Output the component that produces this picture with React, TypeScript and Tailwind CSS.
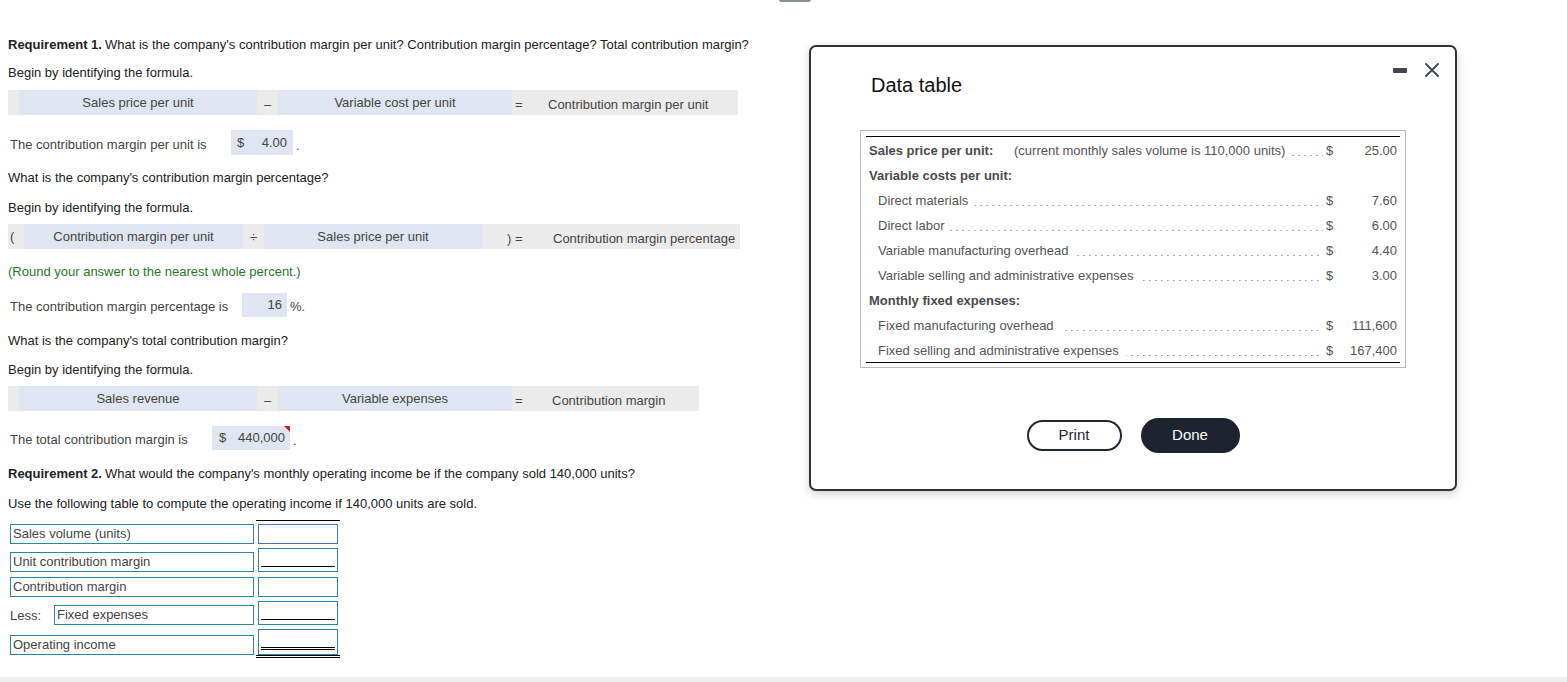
import type { ReactNode } from "react";

const line = "flex h-5 items-center";

function Cell({ w, tone, children, className = "" }: { w: string; tone: "blue" | "gray"; children?: ReactNode; className?: string }) {
	return (
		<div className={`flex h-full items-center ${w} ${tone === "blue" ? "bg-[#dfe6f1]" : "bg-[#ebebeb]"} ${className}`}>
			{children}
		</div>
	);
}

// dot leader between a label and its amount, anchored to the right
function Leader({ tight = false }: { tight?: boolean }) {
	return (
		<span
			className={`${tight ? "ml-[2px]" : "ml-[7px]"} mr-[2px] h-px flex-1 translate-y-[4px] bg-[linear-gradient(to_right,#5f5f5f_1px,transparent_1px)] bg-[length:6px_1px] bg-right bg-repeat-x`}
		/>
	);
}

type Row = { label: string; note?: string; amount?: string; kind: "head" | "item"; tight?: boolean };

const rows: Row[] = [
	{ label: "Sales price per unit:", note: "(current monthly sales volume is 110,000 units)", amount: "25.00", kind: "head" },
	{ label: "Variable costs per unit:", kind: "head" },
	{ label: "Direct materials", amount: "7.60", kind: "item" },
	{ label: "Direct labor", amount: "6.00", kind: "item", tight: true },
	{ label: "Variable manufacturing overhead", amount: "4.40", kind: "item" },
	{ label: "Variable selling and administrative expenses", amount: "3.00", kind: "item" },
	{ label: "Monthly fixed expenses:", kind: "head" },
	{ label: "Fixed manufacturing overhead", amount: "111,600", kind: "item" },
	{ label: "Fixed selling and administrative expenses", amount: "167,400", kind: "item" },
];

function DataTable() {
	return (
		<div className="mx-[49px] border border-[#bbbbbb] px-[5px] pb-[4px] pt-[5px]">
			<div className="border-y border-black">
				{rows.map((r) => (
					<div key={r.label} className="flex h-[25px] items-center pr-[3px] pt-[3px] text-[13px] text-[#555]">
						{r.kind === "head" ? (
							<span className={`pl-[3px] font-bold text-[#4a4a4a] ${r.note ? "w-[148px]" : ""}`}>{r.label}</span>
						) : (
							<span className="whitespace-nowrap pl-[12px]">{r.label}</span>
						)}
						{r.note && <span className="whitespace-nowrap">{r.note}</span>}
						{r.amount && (
							<>
								<Leader tight={r.tight} />
								<span className="w-[12px] pl-[1px]">$</span>
								<span className="w-[60px] text-right">{r.amount}</span>
							</>
						)}
					</div>
				))}
			</div>
		</div>
	);
}

function DataTableDialog() {
	return (
		<div className="mt-[45px] flex h-[446px] w-[648px] shrink-0 flex-col rounded-[7px] border-2 border-[#333] bg-white shadow-[0_3px_10px_rgba(0,0,0,0.18)]">
			<div className="flex h-[83px] items-start justify-between">
				<h2 className="pl-[60px] pt-[26px] text-[20px] leading-6 text-[#111]">Data table</h2>
				<div className="flex items-center gap-[18px] pr-[16px] pt-[16px]">
					<span className="h-[5px] w-[14px] rounded-[1px] bg-[#3f4650]" />
					<svg width="14" height="14" viewBox="0 0 14 14" stroke="#3f4650" strokeWidth="1.8" strokeLinecap="round">
						<path d="M1 1L13 13M13 1L1 13" />
					</svg>
				</div>
			</div>
			<DataTable />
			<div className="mt-[50px] flex items-center justify-center gap-[19px]">
				<button className="h-[31px] w-[95px] rounded-full border-2 border-[#222833] bg-white text-[15px] text-[#222833]">Print</button>
				<button className="h-[35px] w-[99px] rounded-full bg-[#1e2330] text-[15px] text-white">Done</button>
			</div>
		</div>
	);
}

function AnswerBox({ w, children }: { w: string; children: ReactNode }) {
	return <div className={`flex h-[24px] items-center bg-[#dfe6f1] text-[13px] text-[#444] ${w}`}>{children}</div>;
}

function LabelBox({ children, w = "w-[244px]" }: { children: ReactNode; w?: string }) {
	return (
		<div className={`flex h-[20px] items-center border border-[#2a86a2] pl-[2px] text-[13px] text-[#444] ${w}`}>{children}</div>
	);
}

function IncomeTable() {
	return (
		<div className="mt-[7px] pl-[2px]">
			<div className="ml-[246px] h-px w-[84px] bg-black" />
			<div className="mt-[3px] flex items-end gap-[4px]">
				<LabelBox>Sales volume (units)</LabelBox>
				<div className="h-[20px] w-[80px] border border-[#4a72c8]" />
			</div>
			<div className="mt-[4px] flex items-end gap-[4px]">
				<LabelBox>Unit contribution margin</LabelBox>
				<div className="flex h-[24px] w-[80px] flex-col justify-end border border-[#2a86a2] px-[2px] pb-[4px]">
					<div className="h-px bg-black" />
				</div>
			</div>
			<div className="mt-[5px] flex items-end gap-[4px]">
				<LabelBox>Contribution margin</LabelBox>
				<div className="h-[20px] w-[80px] border border-[#2a86a2]" />
			</div>
			<div className="mt-[4px] flex items-end gap-[4px]">
				<div className="flex h-[20px] w-[244px] items-center gap-[4px]">
					<span className="w-[40px] translate-y-[1px] text-[13px] text-[#444]">Less:</span>
					<LabelBox w="w-[200px]">Fixed expenses</LabelBox>
				</div>
				<div className="flex h-[24px] w-[80px] flex-col justify-end border border-[#2a86a2] px-[2px] pb-[4px]">
					<div className="h-px bg-black" />
				</div>
			</div>
			<div className="mt-[4px] flex items-end gap-[4px]">
				<LabelBox>Operating income</LabelBox>
				<div className="flex h-[26px] w-[80px] flex-col justify-end border border-[#2a86a2] px-[2px] pb-[4px]">
					<div className="h-[3px] border-y border-black" />
				</div>
			</div>
			<div className="ml-[246px] h-[3px] w-[84px] border-y border-black" />
		</div>
	);
}

function Worksheet() {
	return (
		<div className="w-[809px] shrink-0 pl-[8px] pt-[35px] text-[13px] text-[#222]">
			<p className={line}>
				<b className="mr-[3px]">Requirement 1.</b> What is the company's contribution margin per unit? Contribution margin percentage? Total contribution margin?
			</p>
			<p className={`mt-2 ${line}`}>Begin by identifying the formula.</p>

			<div className="mt-[7px] flex h-[25px] text-[#444]">
				<Cell w="w-[11px]" tone="gray" />
				<Cell w="w-[238px]" tone="blue" className="justify-center">Sales price per unit</Cell>
				<Cell w="w-[21px]" tone="gray" className="justify-center pt-[4px]">–</Cell>
				<Cell w="w-[234px]" tone="blue" className="justify-center">Variable cost per unit</Cell>
				<Cell w="w-[226px]" tone="gray" className="pt-[4px]">
					<span className="w-[36px] pl-[3px]">=</span>
					Contribution margin per unit
				</Cell>
			</div>

			<div className="mt-[15px] flex h-[25px] items-center pl-[2px] text-[#444]">
				<span className="w-[221px] translate-y-[2px]">The contribution margin per unit is</span>
				<AnswerBox w="w-[62px] h-[25px] justify-between px-[6px]">
					<span>$</span>
					<span>4.00</span>
				</AnswerBox>
				<span className="ml-[3px] translate-y-[3px]">.</span>
			</div>

			<p className={`mt-3 ${line} translate-y-[1px]`}>What is the company's contribution margin percentage?</p>
			<p className={`mt-[10px] ${line} translate-y-[1px]`}>Begin by identifying the formula.</p>

			<div className="mt-[7px] flex h-[25px] text-[#444]">
				<Cell w="w-[16px]" tone="gray" className="pl-[2px]">(</Cell>
				<Cell w="w-[219px]" tone="blue" className="justify-center">Contribution margin per unit</Cell>
				<Cell w="w-[21px]" tone="gray" className="justify-center pt-[3px]">÷</Cell>
				<Cell w="w-[218px]" tone="blue" className="justify-center">Sales price per unit</Cell>
				<Cell w="w-[258px]" tone="gray" className="pt-[4px]">
					<span className="w-[71px] pl-[25px]">) =</span>
					Contribution margin percentage
				</Cell>
			</div>

			<p className={`mt-3 ${line} translate-y-[1px] text-[#1f7a1f]`}>(Round your answer to the nearest whole percent.)</p>

			<div className="mt-3 flex h-[24px] items-center pl-[2px] text-[#444]">
				<span className="w-[232px] translate-y-[2px]">The contribution margin percentage is</span>
				<AnswerBox w="w-[45px] justify-end pr-[5px]">16</AnswerBox>
				<span className="ml-[3px] translate-y-[2px]">%.</span>
			</div>

			<p className={`mt-[13px] ${line} translate-y-[1px]`}>What is the company's total contribution margin?</p>
			<p className={`mt-[9px] ${line} translate-y-[1px]`}>Begin by identifying the formula.</p>

			<div className="mt-[7px] flex h-[25px] text-[#444]">
				<Cell w="w-[11px]" tone="gray" />
				<Cell w="w-[238px]" tone="blue" className="justify-center">Sales revenue</Cell>
				<Cell w="w-[21px]" tone="gray" className="justify-center pt-[4px]">–</Cell>
				<Cell w="w-[234px]" tone="blue" className="justify-center">Variable expenses</Cell>
				<Cell w="w-[187px]" tone="gray" className="pt-[4px]">
					<span className="w-[40px] pl-[3px]">=</span>
					Contribution margin
				</Cell>
			</div>

			<div className="mt-[15px] flex h-[24px] items-center pl-[2px] text-[#444]">
				<span className="w-[202px] translate-y-[2px]">The total contribution margin is</span>
				<div className="relative">
					<AnswerBox w="w-[78px] justify-between pl-[7px] pr-[5px]">
						<span>$</span>
						<span>440,000</span>
					</AnswerBox>
					<span className="absolute right-0 top-0 h-0 w-0 border-l-[6px] border-t-[6px] border-l-transparent border-t-[#c8202a]" />
				</div>
				<span className="ml-[3px] translate-y-[3px]">.</span>
			</div>

			<p className={`mt-[13px] ${line} translate-y-[1px]`}>
				<b className="mr-[3px]">Requirement 2.</b> What would the company's monthly operating income be if the company sold 140,000 units?
			</p>
			<p className={`mt-[10px] ${line} translate-y-[1px]`}>Use the following table to compute the operating income if 140,000 units are sold.</p>

			<IncomeTable />
		</div>
	);
}

export default function App() {
	return (
		<div className="relative flex h-[682px] w-[1567px] flex-col overflow-hidden bg-white font-['Liberation_Sans',Arial,sans-serif]">
			<span className="absolute left-[779px] top-[-3px] h-[5px] w-[32px] rounded-[3px] bg-[#8a8f96]" />
			<div className="flex flex-1">
				<Worksheet />
				<DataTableDialog />
			</div>
			<div className="h-[5px] bg-[#eeeeee]" />
		</div>
	);
}
